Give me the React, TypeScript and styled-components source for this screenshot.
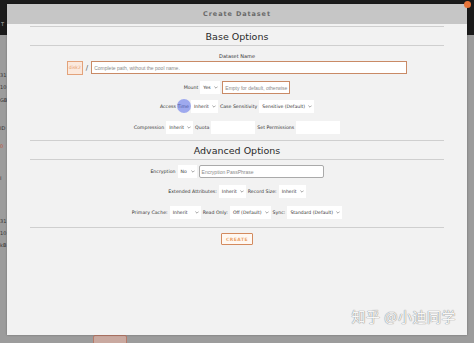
import React from 'react';
import styled, { createGlobalStyle } from 'styled-components';

const Global = createGlobalStyle`
  html, body { margin: 0; padding: 0; }
  body { font-family: "DejaVu Sans", sans-serif; background: #9d9d9d; }
`;

const Page = styled.div`
  position: relative;
  width: 474px;
  height: 343px;
  overflow: hidden;
  display: flex;
  flex-direction: column;
`;

const TopBar = styled.div`
  height: 35px;
  background: #1b1b1b;
  color: #bbb;
  font-size: 5px;
  display: flex;
  align-items: flex-end;
  padding: 0 0 8px 1px;
  box-sizing: border-box;
`;

const Backdrop = styled.div`
  flex: 1;
  background: #9c9c9c;
  position: relative;
`;

const BgLine = styled.div<{ $top: number; $accent?: boolean }>`
  position: absolute;
  left: 0;
  top: ${p => p.$top}px;
  font-size: 5px;
  color: ${p => (p.$accent ? '#c0543a' : '#333')};
`;

const BgButton = styled.div`
  position: absolute;
  left: 93px;
  bottom: -4px;
  width: 32px;
  height: 10px;
  border: 1px solid #b87b6a;
  border-radius: 2px;
  background: #c9a9a0;
`;

const Modal = styled.div`
  position: absolute;
  left: 7px;
  top: 4px;
  width: 460px;
  height: 331px;
  background: #f2f2f2;
  display: flex;
  flex-direction: column;
  box-shadow: 0 0 2px rgba(0, 0, 0, 0.3);
`;

const CloseDot = styled.div`
  position: absolute;
  right: -4px;
  top: -3px;
  width: 7px;
  height: 7px;
  border-radius: 50%;
  background: #e8753a;
`;

const Header = styled.div`
  height: 20px;
  background: #c6c6c6;
  display: flex;
  align-items: center;
  justify-content: center;
  font-size: 6.5px;
  font-weight: bold;
  letter-spacing: 0.9px;
  color: #6a6a6a;
`;

const Body = styled.div`
  padding: 2px 23px 0;
  display: flex;
  flex-direction: column;
  align-items: center;
`;

const Rule = styled.div<{ $mt?: number }>`
  align-self: stretch;
  height: 1px;
  margin-top: ${p => p.$mt ?? 0}px;
  background: #cfcfcf;
`;

const SectionTitle = styled.div`
  height: 18px;
  display: flex;
  align-items: center;
  justify-content: center;
  font-size: 9.5px;
  color: #2a2a2a;
`;

const FieldLabel = styled.div`
  margin-top: 6px;
  height: 8px;
  font-size: 5px;
  color: #333;
  display: flex;
  align-items: center;
`;

const Row = styled.div<{ $mt: number }>`
  margin-top: ${p => p.$mt}px;
  height: 13px;
  display: flex;
  align-items: center;
  gap: 2px;
  font-size: 4.8px;
  color: #333;
`;

const Label = styled.span`
  font-size: 4.7px;
  color: #333;
  white-space: nowrap;
`;

const Prefix = styled.div`
  width: 14px;
  height: 12px;
  border: 1px solid #e3a27a;
  background: #fbe9dd;
  color: #e79a6a;
  font-size: 4.5px;
  display: flex;
  align-items: center;
  justify-content: center;
`;

const Slash = styled.span`
  font-size: 7px;
  color: #555;
  padding: 0 1px;
`;

const TextInput = styled.div<{ $w: number; $border: string; $radius?: number }>`
  width: ${p => p.$w}px;
  height: ${p => (p.$border === 'none' ? 13 : 11)}px;
  border: ${p => p.$border};
  border-radius: ${p => p.$radius ?? 0}px;
  background: #fff;
  color: #8a8a8a;
  font-family: "Liberation Sans", Arial, sans-serif;
  font-size: 5px;
  display: flex;
  align-items: center;
  padding-left: 2px;
  overflow: hidden;
  white-space: nowrap;
`;

const Select = styled.div<{ $w: number }>`
  min-width: ${p => p.$w}px;
  height: 13px;
  background: #fff;
  color: #333;
  font-size: 4.6px;
  display: flex;
  align-items: center;
  justify-content: space-between;
  gap: 3px;
  padding: 0 2px 0 3px;
  box-sizing: border-box;
  white-space: nowrap;
`;

const Chevron = () => (
  <svg width="4" height="3" viewBox="0 0 4 3" style={{ flexShrink: 0 }}>
    <path d="M0.4 0.6 L2 2.2 L3.6 0.6" fill="none" stroke="#666" strokeWidth="0.6" />
  </svg>
);

const Cursor = styled.div`
  position: absolute;
  left: 177px;
  top: 99px;
  width: 14px;
  height: 14px;
  border-radius: 50%;
  background: rgba(90, 110, 235, 0.55);
`;

const CreateButton = styled.div`
  margin-top: 5px;
  width: 32px;
  height: 12px;
  box-sizing: border-box;
  border: 1px solid #d38a5e;
  border-radius: 1px;
  background: #fff8f2;
  color: #eba36a;
  font-size: 4.5px;
  font-weight: bold;
  letter-spacing: 0.5px;
  display: flex;
  align-items: center;
  justify-content: center;
`;

const Watermark = styled.div`
  position: absolute;
  right: 11px;
  bottom: 9px;
  font-family: "Noto Sans CJK SC", sans-serif;
  font-size: 14px;
  color: #f7f7f7;
  text-shadow: 0 0 1px #8a8a8a, 0 0 1px #8a8a8a;
  letter-spacing: 0.5px;
`;

const Sel = ({ w, text }: { w: number; text: string }) => (
  <Select $w={w}>
    <span>{text}</span>
    <Chevron />
  </Select>
);

const orange = '1px solid #c98a66';

export default function App() {
  return (
    <>
      <Global />
      <Page>
        <TopBar>T</TopBar>
        <Backdrop>
          <BgLine $top={37}>31</BgLine>
          <BgLine $top={49}>10</BgLine>
          <BgLine $top={62}>GB</BgLine>
          <BgLine $top={90}>ID</BgLine>
          <BgLine $top={108} $accent>0</BgLine>
          <BgLine $top={140}>I</BgLine>
          <BgLine $top={183}>31</BgLine>
          <BgLine $top={195}>10</BgLine>
          <BgLine $top={207}>kB</BgLine>
          <BgButton />
        </Backdrop>

        <Modal>
          <CloseDot />
          <Header>Create Dataset</Header>
          <Body>
            <Rule />
            <SectionTitle>Base Options</SectionTitle>
            <Rule />
            <FieldLabel>Dataset Name</FieldLabel>
            <Row $mt={1}>
              <Prefix>disk2</Prefix>
              <Slash>/</Slash>
              <TextInput $w={312} $border={orange}>Complete path, without the pool name.</TextInput>
            </Row>
            <Row $mt={7}>
              <Label>Mount</Label>
              <Sel w={20} text="Yes" />
              <TextInput $w={64} $border={orange}>Empty for default, otherwise</TextInput>
            </Row>
            <Row $mt={6}>
              <Label>Access Time</Label>
              <Sel w={25} text="Inherit" />
              <Label>Case Sensitivity</Label>
              <Sel w={53} text="Sensitive (Default)" />
            </Row>
            <Row $mt={8}>
              <Label>Compression</Label>
              <Sel w={24} text="Inherit" />
              <Label>Quota</Label>
              <TextInput $w={42} $border="none" />
              <Label>Set Permissions</Label>
              <TextInput $w={42} $border="none" />
            </Row>
            <Rule $mt={6} />
            <SectionTitle>Advanced Options</SectionTitle>
            <Rule />
            <Row $mt={5}>
              <Label>Encryption</Label>
              <Sel w={19} text="No" />
              <TextInput $w={121} $border="1px solid #aaa" $radius={2}>Encryption PassPhrase</TextInput>
            </Row>
            <Row $mt={7}>
              <Label>Extended Attributes:</Label>
              <Sel w={24} text="Inherit" />
              <Label>Record Size:</Label>
              <Sel w={25} text="Inherit" />
            </Row>
            <Row $mt={8}>
              <Label>Primary Cache:</Label>
              <Sel w={31} text="Inherit" />
              <Label>Read Only:</Label>
              <Sel w={36} text="Off (Default)" />
              <Label>Sync:</Label>
              <Sel w={52} text="Standard (Default)" />
            </Row>
            <Rule $mt={8} />
            <CreateButton>CREATE</CreateButton>
          </Body>
          <Watermark>知乎 @小迪同学</Watermark>
        </Modal>
        <Cursor />
      </Page>
    </>
  );
}
